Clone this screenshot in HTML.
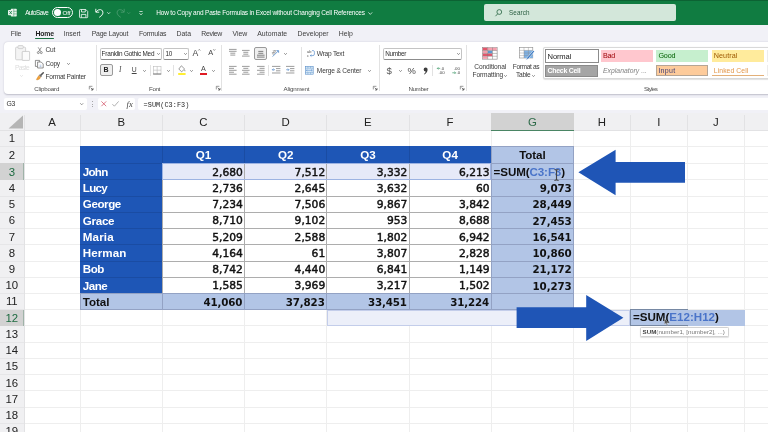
<!DOCTYPE html>
<html lang="en">
<head>
<meta charset="utf-8">
<title>Excel</title>
<style>
html,body{margin:0;padding:0;}
body{width:768px;height:432px;overflow:hidden;background:#fff;font-family:"Liberation Sans",sans-serif;}
#root{filter:url(#soft);position:relative;width:768px;height:432px;overflow:hidden;background:#fff;}
#root div,#root span,#root svg{position:absolute;}
#root span{white-space:nowrap;}
#root svg{overflow:visible;}

</style>
</head>
<body>
<svg width="0" height="0" style="position:absolute"><defs><filter id="soft" x="0" y="0" width="100%" height="100%" color-interpolation-filters="sRGB"><feGaussianBlur stdDeviation="0.55" edgeMode="duplicate"/></filter></defs></svg>
<div id="root">
<div style="left:0.00px;top:0.00px;width:768.00px;height:25.40px;background:#107c41;"></div>
<div style="left:0.00px;top:0.00px;width:768.00px;height:1.00px;background:#0c6233;"></div>
<div style="left:0.00px;top:25.40px;width:768.00px;height:88.00px;background:#f1f1f7;"></div>
<svg style="left:8.00px;top:8.00px;" width="9.2" height="9.2" viewBox="0 0 10.5 10">
<rect x="3.2" y="0.6" width="6.8" height="8.8" rx="0.8" fill="#e8f3ec"/>
<line x1="6.6" y1="0.6" x2="6.6" y2="9.4" stroke="#107c41" stroke-width="0.5"/>
<line x1="3.2" y1="3.5" x2="10" y2="3.5" stroke="#107c41" stroke-width="0.5"/>
<line x1="3.2" y1="6.5" x2="10" y2="6.5" stroke="#107c41" stroke-width="0.5"/>
<rect x="0" y="2" width="6" height="6" rx="0.7" fill="#e8f3ec"/>
<path d="M1.6 3.3 L4.4 6.7 M4.4 3.3 L1.6 6.7" stroke="#107c41" stroke-width="0.9" fill="none"/>
</svg>
<span id="t1" style="top:9.32px;font-size:6.3px;line-height:7.56px;color:#fff;letter-spacing:-0.527px;left:25.20px;">AutoSave</span>
<div style="left:52.20px;top:7.20px;width:20.60px;height:11.00px;border:0.9px solid #fff;border-radius:6px;box-sizing:border-box;"></div>
<div style="left:53.60px;top:8.90px;width:7.60px;height:7.60px;background:#fff;border-radius:50%;"></div>
<span id="t2" style="top:9.18px;font-size:6.2px;line-height:7.44px;color:#fff;letter-spacing:-0.180px;left:62.60px;">Off</span>
<svg style="left:79.00px;top:8.60px;" width="9.2" height="9.2" viewBox="0 0 9.2 9.2">
<path d="M0.5 1.3 Q0.5 0.5 1.3 0.5 L6.8 0.5 L8.7 2.4 L8.7 7.9 Q8.7 8.7 7.9 8.7 L1.3 8.7 Q0.5 8.7 0.5 7.9 Z" fill="none" stroke="#fff" stroke-width="0.8"/>
<path d="M2.5 0.6 L2.5 3 L6.3 3 L6.3 0.6" fill="none" stroke="#fff" stroke-width="0.8"/>
<path d="M2.3 8.6 L2.3 5.4 L6.9 5.4 L6.9 8.6" fill="none" stroke="#fff" stroke-width="0.8"/>
</svg>
<svg style="left:94.50px;top:8.40px;" width="9" height="10" viewBox="0 0 9 10">
<path d="M0.8 0.8 L0.8 4.2 L4.2 4.2" fill="none" stroke="#fff" stroke-width="0.9"/>
<path d="M1 4 Q3 1.2 5.6 1.6 Q8.2 2.2 8 5 Q7.6 7.4 4.2 9.4" fill="none" stroke="#fff" stroke-width="0.9"/>
</svg>
<svg style="left:106.60px;top:12.00px;" width="3.4" height="2.4" viewBox="0 0 3.4 2.4"><path d="M0.3 0.3 L1.7 1.8 L3.1 0.3" fill="none" stroke="#fff" stroke-width="0.7"/></svg>
<svg style="left:115.60px;top:8.40px;" width="9" height="10" viewBox="0 0 9 10">
<path d="M8.2 0.8 L8.2 4.2 L4.8 4.2" fill="none" stroke="#479a6d" stroke-width="0.9"/>
<path d="M8 4 Q6 1.2 3.4 1.6 Q0.8 2.2 1 5 Q1.4 7.4 4.8 9.4" fill="none" stroke="#479a6d" stroke-width="0.9"/>
</svg>
<svg style="left:127.40px;top:12.00px;" width="3.4" height="2.4" viewBox="0 0 3.4 2.4"><path d="M0.3 0.3 L1.7 1.8 L3.1 0.3" fill="none" stroke="#4c9a70" stroke-width="0.7"/></svg>
<svg style="left:138.80px;top:10.60px;" width="4" height="5" viewBox="0 0 4 5"><path d="M0.4 0.5 L3.6 0.5" stroke="#fff" stroke-width="0.7"/><path d="M0.5 2.2 L2 3.9 L3.5 2.2" fill="none" stroke="#fff" stroke-width="0.7"/></svg>
<span id="t3" style="top:9.30px;font-size:6.5px;line-height:7.80px;color:#fff;letter-spacing:-0.185px;left:156.30px;">How to Copy and Paste Formulas in Excel without Changing Cell References</span>
<svg style="left:367.60px;top:11.60px;" width="4.6" height="3" viewBox="0 0 4.6 3"><path d="M0.4 0.4 L2.3 2.4 L4.2 0.4" fill="none" stroke="#fff" stroke-width="0.7"/></svg>
<div style="left:483.50px;top:4.40px;width:192.50px;height:16.40px;background:#d3e7da;border-radius:2px;"></div>
<svg style="left:494.50px;top:8.60px;" width="7.2" height="7.6" viewBox="0 0 7.2 7.6"><circle cx="4.3" cy="3" r="2.4" fill="none" stroke="#1c5c38" stroke-width="0.75"/><path d="M2.6 4.9 L0.5 7.2" stroke="#1c5c38" stroke-width="0.75"/></svg>
<span id="t4" style="top:9.22px;font-size:6.3px;line-height:7.56px;color:#2a5e41;letter-spacing:0.091px;left:509.00px;">Search</span>
<span id="t5" style="top:29.76px;font-size:6.9px;line-height:8.28px;color:#3d3d3d;letter-spacing:-0.152px;left:10.80px;">File</span>
<span id="t6" style="top:29.76px;font-size:6.9px;line-height:8.28px;color:#1f1f1f;font-weight:700;letter-spacing:-0.189px;left:35.40px;">Home</span>
<span id="t7" style="top:29.76px;font-size:6.9px;line-height:8.28px;color:#3d3d3d;letter-spacing:-0.106px;left:63.80px;">Insert</span>
<span id="t8" style="top:29.76px;font-size:6.9px;line-height:8.28px;color:#3d3d3d;letter-spacing:-0.200px;left:91.70px;">Page Layout</span>
<span id="t9" style="top:29.76px;font-size:6.9px;line-height:8.28px;color:#3d3d3d;letter-spacing:-0.177px;left:139.00px;">Formulas</span>
<span id="t10" style="top:29.76px;font-size:6.9px;line-height:8.28px;color:#3d3d3d;letter-spacing:-0.016px;left:176.50px;">Data</span>
<span id="t11" style="top:29.76px;font-size:6.9px;line-height:8.28px;color:#3d3d3d;letter-spacing:-0.316px;left:201.30px;">Review</span>
<span id="t12" style="top:29.76px;font-size:6.9px;line-height:8.28px;color:#3d3d3d;letter-spacing:-0.003px;left:232.50px;">View</span>
<span id="t13" style="top:29.76px;font-size:6.9px;line-height:8.28px;color:#3d3d3d;letter-spacing:0.075px;left:257.20px;">Automate</span>
<span id="t14" style="top:29.76px;font-size:6.9px;line-height:8.28px;color:#3d3d3d;letter-spacing:-0.047px;left:297.60px;">Developer</span>
<span id="t15" style="top:29.76px;font-size:6.9px;line-height:8.28px;color:#3d3d3d;letter-spacing:0.032px;left:338.70px;">Help</span>
<div style="left:35.40px;top:38.40px;width:18.40px;height:1.10px;background:#1c6f42;border-radius:1px;"></div>
<div style="left:4.00px;top:41.70px;width:770.00px;height:51.90px;background:#fff;border-radius:4px 0 0 4px;box-shadow:0 0.6px 1.6px rgba(60,60,90,0.28);"></div>
<div style="left:95.50px;top:45.00px;width:0.60px;height:46.00px;background:#e2e2e2;"></div>
<div style="left:221.00px;top:45.00px;width:0.60px;height:46.00px;background:#e2e2e2;"></div>
<div style="left:378.70px;top:45.00px;width:0.60px;height:46.00px;background:#e2e2e2;"></div>
<div style="left:466.30px;top:45.00px;width:0.60px;height:46.00px;background:#e2e2e2;"></div>
<div style="left:150.00px;top:65.00px;width:0.60px;height:11.00px;background:#e2e2e2;"></div>
<div style="left:172.60px;top:65.00px;width:0.60px;height:11.00px;background:#e2e2e2;"></div>
<div style="left:268.40px;top:65.00px;width:0.60px;height:11.00px;background:#e2e2e2;"></div>
<div style="left:300.80px;top:47.00px;width:0.60px;height:33.00px;background:#e2e2e2;"></div>
<div style="left:432.30px;top:65.00px;width:0.60px;height:11.00px;background:#e2e2e2;"></div>
<svg style="left:15.00px;top:45.40px;" width="15.5" height="16" viewBox="0 0 15.5 16">
<rect x="0.6" y="2.2" width="10" height="12.6" rx="1" fill="#f4f4f4" stroke="#c9c9c9" stroke-width="0.8"/>
<rect x="3" y="0.6" width="5.2" height="3" rx="0.8" fill="#f0f0f0" stroke="#c9c9c9" stroke-width="0.8"/>
<rect x="7.2" y="6.4" width="7.4" height="9" rx="0.6" fill="#fbfbfb" stroke="#c4c4c4" stroke-width="0.8"/>
</svg>
<span id="t16" style="top:63.64px;font-size:6.6px;line-height:7.92px;color:#dcdcdc;letter-spacing:-0.535px;left:22.00px;transform:translateX(-50%);">Paste</span>
<svg style="left:19.90px;top:75.30px;" width="3.0" height="1.9" viewBox="0 0 3.0 1.9"><path d="M0.2 0.2 L1.5 1.6 L2.8 0.2" fill="none" stroke="#d8d8d8" stroke-width="0.65"/></svg>
<svg style="left:37.00px;top:46.60px;" width="5.6" height="7" viewBox="0 0 5.6 7">
<path d="M1.2 0.3 L3.9 4.6 M4.4 0.3 L1.7 4.6" stroke="#555" stroke-width="0.6" fill="none"/>
<circle cx="1.3" cy="5.6" r="1" fill="none" stroke="#555" stroke-width="0.6"/>
<circle cx="4.3" cy="5.6" r="1" fill="none" stroke="#555" stroke-width="0.6"/></svg>
<span id="t17" style="top:46.14px;font-size:6.6px;line-height:7.92px;color:#3a3a3a;letter-spacing:-0.222px;left:45.50px;">Cut</span>
<svg style="left:35.20px;top:59.60px;" width="8.8" height="8.4" viewBox="0 0 8.8 8.4">
<path d="M0.4 0.4 L4.6 0.4 L4.6 1.8 M0.4 0.4 L0.4 6.4 L2.4 6.4" fill="none" stroke="#555" stroke-width="0.65"/>
<path d="M2.6 2 L6.2 2 L8.2 4 L8.2 8 L2.6 8 Z" fill="#fff" stroke="#555" stroke-width="0.65"/>
<path d="M4.6 5.2 L6.4 5.2 M4.6 6.5 L6.4 6.5" stroke="#6d8fc4" stroke-width="0.5"/></svg>
<span id="t18" style="top:59.84px;font-size:6.6px;line-height:7.92px;color:#3a3a3a;letter-spacing:-0.252px;left:45.50px;">Copy</span>
<svg style="left:67.10px;top:62.90px;" width="3.0" height="1.9" viewBox="0 0 3.0 1.9"><path d="M0.2 0.2 L1.5 1.6 L2.8 0.2" fill="none" stroke="#555" stroke-width="0.65"/></svg>
<svg style="left:36.00px;top:72.40px;" width="8" height="8.6" viewBox="0 0 8 8.6">
<path d="M7.3 0.7 L4.9 3.1" stroke="#555" stroke-width="1.5" stroke-linecap="round"/>
<path d="M3.9 2.3 L5.9 4.3 L4.9 5.2 L3 3.3 Z" fill="#6a6a6a"/>
<path d="M2.8 3.6 L4.7 5.5 Q3.8 7.6 1 8 Q0.2 8 0.5 7.2 Q1.6 5.2 2.8 3.6 Z" fill="#f0a13a" stroke="#c77a1c" stroke-width="0.35"/></svg>
<span id="t19" style="top:73.14px;font-size:6.6px;line-height:7.92px;color:#3a3a3a;letter-spacing:-0.236px;left:45.50px;">Format Painter</span>
<span id="t20" style="top:84.68px;font-size:6.2px;line-height:7.44px;color:#4a4a4a;letter-spacing:-0.165px;left:34.20px;">Clipboard</span>
<svg style="left:89.00px;top:86.40px;" width="4.4" height="4.4" viewBox="0 0 4.4 4.4"><path d="M0.3 3.4 L0.3 0.3 L3.4 0.3" fill="none" stroke="#555" stroke-width="0.6"/><path d="M1.7 1.7 L4 4 M4 2 L4 4 L2 4" fill="none" stroke="#444" stroke-width="0.7"/></svg>
<div style="left:100.00px;top:47.50px;width:62.00px;height:12.00px;border:0.6px solid #c4c4c4;border-bottom-color:#8c8c8c;border-radius:2px;box-sizing:border-box;background:#fff;"></div>
<span id="t21" style="top:49.66px;font-size:6.4px;line-height:7.68px;color:#2b2b2b;letter-spacing:-0.241px;left:101.60px;">Franklin Gothic Med</span>
<svg style="left:156.50px;top:52.80px;" width="3.0" height="1.9" viewBox="0 0 3.0 1.9"><path d="M0.2 0.2 L1.5 1.6 L2.8 0.2" fill="none" stroke="#555" stroke-width="0.65"/></svg>
<div style="left:163.20px;top:47.50px;width:26.20px;height:12.00px;border:0.6px solid #c4c4c4;border-bottom-color:#8c8c8c;border-radius:2px;box-sizing:border-box;background:#fff;"></div>
<span id="t22" style="top:49.66px;font-size:6.4px;line-height:7.68px;color:#2b2b2b;letter-spacing:-0.455px;left:165.60px;">10</span>
<svg style="left:184.10px;top:52.80px;" width="3.0" height="1.9" viewBox="0 0 3.0 1.9"><path d="M0.2 0.2 L1.5 1.6 L2.8 0.2" fill="none" stroke="#555" stroke-width="0.65"/></svg>
<span id="t23" style="top:47.84px;font-size:8.6px;line-height:10.32px;color:#444;left:192.60px;">A</span>
<svg style="left:198.40px;top:48.80px;" width="2.6" height="1.8" viewBox="0 0 2.6 1.8"><path d="M0.2 1.6 L1.3 0.3 L2.4 1.6" fill="none" stroke="#444" stroke-width="0.5"/></svg>
<span id="t24" style="top:49.16px;font-size:7.4px;line-height:8.88px;color:#444;left:208.20px;">A</span>
<svg style="left:212.80px;top:49.20px;" width="2.6" height="1.8" viewBox="0 0 2.6 1.8"><path d="M0.2 0.2 L1.3 1.5 L2.4 0.2" fill="none" stroke="#444" stroke-width="0.5"/></svg>
<div style="left:99.60px;top:64.00px;width:13.00px;height:12.20px;border:0.7px solid #9a9a9a;border-radius:2px;box-sizing:border-box;background:#efefef;"></div>
<span id="t25" style="top:66.00px;font-size:7px;line-height:8.40px;color:#222;font-weight:700;left:106.10px;transform:translateX(-50%);">B</span>
<span id="t26" style="top:65.88px;font-size:7.2px;line-height:8.64px;color:#444;font-style:italic;font-family:'Liberation Serif',serif;left:120.20px;transform:translateX(-50%);">I</span>
<span id="t27" style="top:65.72px;font-size:6.8px;line-height:8.16px;color:#444;left:134.20px;transform:translateX(-50%);text-decoration:underline;text-underline-offset:0.6px;">U</span>
<svg style="left:143.10px;top:69.50px;" width="3.0" height="1.9" viewBox="0 0 3.0 1.9"><path d="M0.2 0.2 L1.5 1.6 L2.8 0.2" fill="none" stroke="#555" stroke-width="0.65"/></svg>
<svg style="left:153.40px;top:66.20px;" width="8.4" height="8.4" viewBox="0 0 9 9">
<rect x="0.4" y="0.4" width="8.2" height="8.2" fill="none" stroke="#b8b8b8" stroke-width="0.6"/>
<path d="M4.5 0.4 L4.5 8.6 M0.4 4.5 L8.6 4.5" stroke="#b8b8b8" stroke-width="0.6"/>
<path d="M0.2 8.6 L8.8 8.6" stroke="#555" stroke-width="0.8"/></svg>
<svg style="left:166.50px;top:69.50px;" width="3.0" height="1.9" viewBox="0 0 3.0 1.9"><path d="M0.2 0.2 L1.5 1.6 L2.8 0.2" fill="none" stroke="#555" stroke-width="0.65"/></svg>
<svg style="left:177.60px;top:64.60px;" width="8" height="10.4" viewBox="0 0 8 10.4">
<path d="M3.4 0.8 L6.6 4 L3.6 6.8 L0.8 4 Z" fill="#fff" stroke="#555" stroke-width="0.6"/>
<path d="M6.8 4.6 Q7.8 6 7 6.6 Q6.2 6 6.8 4.6Z" fill="#555"/>
<rect x="0.2" y="8" width="7.4" height="2" fill="#ffee33"/></svg>
<svg style="left:189.70px;top:69.50px;" width="3.0" height="1.9" viewBox="0 0 3.0 1.9"><path d="M0.2 0.2 L1.5 1.6 L2.8 0.2" fill="none" stroke="#555" stroke-width="0.65"/></svg>
<span id="t28" style="top:65.08px;font-size:7.2px;line-height:8.64px;color:#444;left:203.30px;transform:translateX(-50%);">A</span>
<div style="left:199.80px;top:72.80px;width:7.00px;height:1.90px;background:#e01b24;"></div>
<svg style="left:211.70px;top:69.50px;" width="3.0" height="1.9" viewBox="0 0 3.0 1.9"><path d="M0.2 0.2 L1.5 1.6 L2.8 0.2" fill="none" stroke="#555" stroke-width="0.65"/></svg>
<span id="t29" style="top:84.68px;font-size:6.2px;line-height:7.44px;color:#4a4a4a;letter-spacing:-0.348px;left:149.00px;">Font</span>
<svg style="left:215.60px;top:86.40px;" width="4.4" height="4.4" viewBox="0 0 4.4 4.4"><path d="M0.3 3.4 L0.3 0.3 L3.4 0.3" fill="none" stroke="#555" stroke-width="0.6"/><path d="M1.7 1.7 L4 4 M4 2 L4 4 L2 4" fill="none" stroke="#444" stroke-width="0.7"/></svg>
<svg style="left:228.60px;top:49.40px;" width="7.6" height="7.6" viewBox="0 0 7.6 7.6"><path d="M0.00 0.40 L7.60 0.40" stroke="#666" stroke-width="0.65"/><path d="M0.00 2.30 L7.60 2.30" stroke="#666" stroke-width="0.65"/><path d="M1.30 4.20 L6.30 4.20" stroke="#666" stroke-width="0.65"/><path d="M1.30 6.10 L6.30 6.10" stroke="#666" stroke-width="0.65"/></svg>
<svg style="left:242.40px;top:50.40px;" width="7.6" height="7.6" viewBox="0 0 7.6 7.6"><path d="M0.00 0.40 L7.60 0.40" stroke="#666" stroke-width="0.65"/><path d="M1.30 2.30 L6.30 2.30" stroke="#666" stroke-width="0.65"/><path d="M1.30 4.20 L6.30 4.20" stroke="#666" stroke-width="0.65"/><path d="M0.00 6.10 L7.60 6.10" stroke="#666" stroke-width="0.65"/></svg>
<div style="left:254.40px;top:47.20px;width:12.80px;height:12.40px;border:0.7px solid #9a9a9a;border-radius:2px;box-sizing:border-box;background:#efefef;"></div>
<svg style="left:257.00px;top:51.20px;" width="7.6" height="7.6" viewBox="0 0 7.6 7.6"><path d="M1.30 0.40 L6.30 0.40" stroke="#444" stroke-width="0.65"/><path d="M1.30 2.30 L6.30 2.30" stroke="#444" stroke-width="0.65"/><path d="M0.00 4.20 L7.60 4.20" stroke="#444" stroke-width="0.65"/><path d="M0.00 6.10 L7.60 6.10" stroke="#444" stroke-width="0.65"/></svg>
<svg style="left:272.00px;top:48.60px;" width="8.6" height="8.4" viewBox="0 0 8.6 8.4">
<path d="M0.6 7.6 L6.2 2" stroke="#3a78c2" stroke-width="0.7"/><path d="M4.4 1.6 L6.6 1.6 L6.6 3.8" fill="none" stroke="#3a78c2" stroke-width="0.7"/>
<text x="0" y="4.6" font-size="4.4" fill="#555" transform="rotate(-45 2 4)" font-family="Liberation Sans, sans-serif">ab</text></svg>
<svg style="left:284.10px;top:52.80px;" width="3.0" height="1.9" viewBox="0 0 3.0 1.9"><path d="M0.2 0.2 L1.5 1.6 L2.8 0.2" fill="none" stroke="#555" stroke-width="0.65"/></svg>
<svg style="left:228.60px;top:65.80px;" width="7.6" height="9.75" viewBox="0 0 7.6 9.75"><path d="M0.00 0.40 L7.60 0.40" stroke="#666" stroke-width="0.65"/><path d="M0.00 2.35 L5.00 2.35" stroke="#666" stroke-width="0.65"/><path d="M0.00 4.30 L7.60 4.30" stroke="#666" stroke-width="0.65"/><path d="M0.00 6.25 L5.00 6.25" stroke="#666" stroke-width="0.65"/><path d="M0.00 8.20 L7.60 8.20" stroke="#666" stroke-width="0.65"/></svg>
<svg style="left:242.40px;top:65.80px;" width="7.6" height="9.75" viewBox="0 0 7.6 9.75"><path d="M0.00 0.40 L7.60 0.40" stroke="#666" stroke-width="0.65"/><path d="M1.30 2.35 L6.30 2.35" stroke="#666" stroke-width="0.65"/><path d="M0.00 4.30 L7.60 4.30" stroke="#666" stroke-width="0.65"/><path d="M1.30 6.25 L6.30 6.25" stroke="#666" stroke-width="0.65"/><path d="M0.00 8.20 L7.60 8.20" stroke="#666" stroke-width="0.65"/></svg>
<svg style="left:256.60px;top:65.80px;" width="7.6" height="9.75" viewBox="0 0 7.6 9.75"><path d="M0.00 0.40 L7.60 0.40" stroke="#666" stroke-width="0.65"/><path d="M2.60 2.35 L7.60 2.35" stroke="#666" stroke-width="0.65"/><path d="M0.00 4.30 L7.60 4.30" stroke="#666" stroke-width="0.65"/><path d="M2.60 6.25 L7.60 6.25" stroke="#666" stroke-width="0.65"/><path d="M0.00 8.20 L7.60 8.20" stroke="#666" stroke-width="0.65"/></svg>
<svg style="left:272.00px;top:66.20px;" width="8.4" height="8" viewBox="0 0 8.4 8"><path d="M0 0.4 L8.4 0.4 M4 2.6 L8.4 2.6 M4 4.8 L8.4 4.8 M0 7 L8.4 7" stroke="#666" stroke-width="0.65"/>
<path d="M3 3.7 L0.4 3.7 M1.5 2.5 L0.3 3.7 L1.5 4.9" fill="none" stroke="#3a78c2" stroke-width="0.6"/></svg>
<svg style="left:286.00px;top:66.20px;" width="8.4" height="8" viewBox="0 0 8.4 8"><path d="M0 0.4 L8.4 0.4 M4 2.6 L8.4 2.6 M4 4.8 L8.4 4.8 M0 7 L8.4 7" stroke="#666" stroke-width="0.65"/>
<path d="M0.2 3.7 L2.9 3.7 M1.8 2.5 L3 3.7 L1.8 4.9" fill="none" stroke="#3a78c2" stroke-width="0.6"/></svg>
<svg style="left:306.60px;top:48.60px;" width="7.6" height="8.4" viewBox="0 0 7.6 8.4">
<text x="0" y="3.6" font-size="4" fill="#555" font-family="Liberation Sans, sans-serif">ab</text>
<text x="0" y="8" font-size="4" fill="#555" font-family="Liberation Sans, sans-serif">c</text>
<path d="M5 1.6 L6.4 1.6 Q7.4 1.6 7.4 3.4 L7.4 5 Q7.4 6.6 6 6.6 L3.4 6.6 M4.4 5.6 L3.3 6.6 L4.4 7.6" fill="none" stroke="#3a78c2" stroke-width="0.6"/></svg>
<span id="t30" style="top:49.74px;font-size:6.6px;line-height:7.92px;color:#3a3a3a;letter-spacing:-0.250px;left:316.80px;">Wrap Text</span>
<svg style="left:305.40px;top:66.00px;" width="8.6" height="8.6" viewBox="0 0 8.6 8.6">
<rect x="0.4" y="0.4" width="7.8" height="7.8" fill="#dfeefa" stroke="#5a8fc8" stroke-width="0.6"/>
<path d="M0.4 2.2 L8.2 2.2 M0.4 6.4 L8.2 6.4 M2.9 0.4 L2.9 2.2 M5.6 0.4 L5.6 2.2 M2.9 6.4 L2.9 8.2 M5.6 6.4 L5.6 8.2" stroke="#5a8fc8" stroke-width="0.45"/>
<path d="M1.4 4.3 L7.2 4.3 M2.3 3.5 L1.4 4.3 L2.3 5.1 M6.3 3.5 L7.2 4.3 L6.3 5.1" fill="none" stroke="#3a78c2" stroke-width="0.5"/></svg>
<span id="t31" style="top:66.64px;font-size:6.6px;line-height:7.92px;color:#3a3a3a;letter-spacing:-0.153px;left:316.80px;">Merge &amp; Center</span>
<svg style="left:368.30px;top:69.70px;" width="3.0" height="1.9" viewBox="0 0 3.0 1.9"><path d="M0.2 0.2 L1.5 1.6 L2.8 0.2" fill="none" stroke="#555" stroke-width="0.65"/></svg>
<span id="t32" style="top:84.68px;font-size:6.2px;line-height:7.44px;color:#4a4a4a;letter-spacing:-0.191px;left:283.60px;">Alignment</span>
<svg style="left:373.00px;top:86.40px;" width="4.4" height="4.4" viewBox="0 0 4.4 4.4"><path d="M0.3 3.4 L0.3 0.3 L3.4 0.3" fill="none" stroke="#555" stroke-width="0.6"/><path d="M1.7 1.7 L4 4 M4 2 L4 4 L2 4" fill="none" stroke="#444" stroke-width="0.7"/></svg>
<div style="left:383.20px;top:47.80px;width:78.60px;height:11.80px;border:0.6px solid #c4c4c4;border-bottom-color:#8c8c8c;border-radius:2px;box-sizing:border-box;background:#fff;"></div>
<span id="t33" style="top:49.76px;font-size:6.4px;line-height:7.68px;color:#2b2b2b;letter-spacing:-0.289px;left:385.20px;">Number</span>
<svg style="left:457.10px;top:52.80px;" width="3.0" height="1.9" viewBox="0 0 3.0 1.9"><path d="M0.2 0.2 L1.5 1.6 L2.8 0.2" fill="none" stroke="#555" stroke-width="0.65"/></svg>
<span id="t34" style="top:64.84px;font-size:9.6px;line-height:11.52px;color:#555;left:389.20px;transform:translateX(-50%);">$</span>
<svg style="left:398.50px;top:69.70px;" width="3.0" height="1.9" viewBox="0 0 3.0 1.9"><path d="M0.2 0.2 L1.5 1.6 L2.8 0.2" fill="none" stroke="#555" stroke-width="0.65"/></svg>
<span id="t35" style="top:64.96px;font-size:9.4px;line-height:11.28px;color:#444;left:411.60px;transform:translateX(-50%);">%</span>
<svg style="left:423.20px;top:66.80px;" width="5" height="8" viewBox="0 0 5 8"><path d="M2.6 0.4 A2 2 0 1 0 2.7 4.4 Q2.4 6 0.9 7 L1.3 7.5 Q4.6 5.6 4.6 2.6 A2.1 2.1 0 0 0 2.6 0.4 Z" fill="#3c3c3c"/></svg>
<svg style="left:437.40px;top:66.00px;" width="8.6" height="8.6" viewBox="0 0 8.6 8.6">
<text x="3.6" y="3.8" font-size="4.4" fill="#444" font-family="Liberation Sans, sans-serif">.0</text>
<text x="1.6" y="8.4" font-size="4.4" fill="#444" font-family="Liberation Sans, sans-serif">.00</text>
<path d="M3.2 2.4 L0.3 2.4 M1.4 1.3 L0.3 2.4 L1.4 3.5" fill="none" stroke="#2f8f5b" stroke-width="0.65"/></svg>
<svg style="left:451.60px;top:66.00px;" width="8.6" height="8.6" viewBox="0 0 8.6 8.6">
<text x="1.8" y="3.8" font-size="4.4" fill="#444" font-family="Liberation Sans, sans-serif">.00</text>
<text x="4.6" y="8.4" font-size="4.4" fill="#444" font-family="Liberation Sans, sans-serif">.0</text>
<path d="M0.3 6.8 L3.6 6.8 M2.5 5.7 L3.6 6.8 L2.5 7.9" fill="none" stroke="#2f8f5b" stroke-width="0.65"/></svg>
<span id="t36" style="top:84.68px;font-size:6.2px;line-height:7.44px;color:#4a4a4a;letter-spacing:-0.353px;left:408.40px;">Number</span>
<svg style="left:459.80px;top:86.40px;" width="4.4" height="4.4" viewBox="0 0 4.4 4.4"><path d="M0.3 3.4 L0.3 0.3 L3.4 0.3" fill="none" stroke="#555" stroke-width="0.6"/><path d="M1.7 1.7 L4 4 M4 2 L4 4 L2 4" fill="none" stroke="#444" stroke-width="0.7"/></svg>
<svg style="left:482.40px;top:46.80px;" width="15.6" height="12.6" viewBox="0 0 14.8 12">
<rect x="0.4" y="0.4" width="14" height="11.2" fill="#fff" stroke="#8a8a8a" stroke-width="0.6"/>
<rect x="0.7" y="0.7" width="4.6" height="2.6" fill="#e4546a"/><rect x="5.6" y="0.7" width="8.5" height="2.6" fill="#f5a0ae"/>
<rect x="0.7" y="3.6" width="4.6" height="2.4" fill="#f5a0ae"/><rect x="5.6" y="3.6" width="4.2" height="2.4" fill="#5b9bd5"/>
<rect x="0.7" y="6.3" width="9" height="2.4" fill="#e4546a"/>
<rect x="0.7" y="9" width="4.6" height="2.3" fill="#f5a0ae"/>
<path d="M5.4 0.4 L5.4 11.6 M10 0.4 L10 11.6 M0.4 3.4 L14.4 3.4 M0.4 6.1 L14.4 6.1 M0.4 8.8 L14.4 8.8" stroke="#7a7a7a" stroke-width="0.45"/></svg>
<span id="t37" style="top:63.04px;font-size:6.6px;line-height:7.92px;color:#3a3a3a;letter-spacing:-0.109px;left:490.20px;transform:translateX(-50%);">Conditional</span>
<span id="t38" style="top:71.04px;font-size:6.6px;line-height:7.92px;color:#3a3a3a;letter-spacing:-0.092px;left:487.80px;transform:translateX(-50%);">Formatting</span>
<svg style="left:504.10px;top:74.50px;" width="3.0" height="1.9" viewBox="0 0 3.0 1.9"><path d="M0.2 0.2 L1.5 1.6 L2.8 0.2" fill="none" stroke="#555" stroke-width="0.65"/></svg>
<svg style="left:518.60px;top:47.20px;" width="15.6" height="12.4" viewBox="0 0 15.6 12.4">
<rect x="0.4" y="0.4" width="13.4" height="10.6" fill="#fff" stroke="#8a8a8a" stroke-width="0.6"/>
<rect x="5" y="3.4" width="8.8" height="7.6" fill="#7fb2e5"/>
<path d="M5 0.4 L5 11 M9.4 0.4 L9.4 11 M0.4 3.4 L13.8 3.4 M0.4 6 L13.8 6 M0.4 8.6 L13.8 8.6" stroke="#8a8a8a" stroke-width="0.4"/>
<path d="M14.4 3.4 L8.4 10.2 L6.6 13.2 L9.6 11.6 L15.4 4.6 Z" fill="#3a78c2" stroke="#fff" stroke-width="0.5"/></svg>
<span id="t39" style="top:63.04px;font-size:6.6px;line-height:7.92px;color:#3a3a3a;letter-spacing:-0.354px;left:526.00px;transform:translateX(-50%);">Format as</span>
<span id="t40" style="top:71.04px;font-size:6.6px;line-height:7.92px;color:#3a3a3a;letter-spacing:-0.273px;left:523.20px;transform:translateX(-50%);">Table</span>
<svg style="left:532.10px;top:74.50px;" width="3.0" height="1.9" viewBox="0 0 3.0 1.9"><path d="M0.2 0.2 L1.5 1.6 L2.8 0.2" fill="none" stroke="#555" stroke-width="0.65"/></svg>
<div style="left:542.80px;top:47.00px;width:230.00px;height:31.60px;background:#fff;border:0.6px solid #d9d9d9;border-radius:2px;box-sizing:border-box;box-shadow:0 0.4px 1px rgba(0,0,0,0.12);"></div>
<div style="left:544.60px;top:49.20px;width:54.00px;height:14.00px;background:#fff;border:0.9px solid #8c8c8c;box-sizing:border-box;"></div>
<span id="t41" style="top:51.64px;font-size:7.6px;line-height:9.12px;color:#222;letter-spacing:-0.181px;left:547.60px;">Normal</span>
<div style="left:601.00px;top:50.20px;width:52.00px;height:11.40px;background:#ffc7ce;"></div>
<span id="t42" style="top:51.78px;font-size:7.2px;line-height:8.64px;color:#9c0006;letter-spacing:-0.266px;left:603.00px;">Bad</span>
<div style="left:656.40px;top:50.20px;width:52.00px;height:11.40px;background:#c6efce;"></div>
<span id="t43" style="top:51.78px;font-size:7.2px;line-height:8.64px;color:#006100;letter-spacing:-0.148px;left:658.40px;">Good</span>
<div style="left:711.80px;top:50.20px;width:52.00px;height:11.40px;background:#ffeb9c;"></div>
<span id="t44" style="top:51.78px;font-size:7.2px;line-height:8.64px;color:#9c5700;letter-spacing:0.061px;left:713.80px;">Neutral</span>
<div style="left:766.60px;top:50.20px;width:6.00px;height:11.40px;background:#ececec;"></div>
<div style="left:544.80px;top:65.20px;width:53.00px;height:11.60px;background:#a5a5a5;border:0.7px solid #8a8a8a;box-sizing:border-box;"></div>
<span id="t45" style="top:66.80px;font-size:7px;line-height:8.40px;color:#fff;font-weight:700;letter-spacing:-0.280px;left:547.40px;">Check Cell</span>
<span id="t46" style="top:66.82px;font-size:6.8px;line-height:8.16px;color:#7f7f7f;font-style:italic;letter-spacing:0.036px;left:603.00px;">Explanatory ...</span>
<div style="left:656.40px;top:65.30px;width:52.00px;height:11.00px;background:#fdcb9b;border:0.5px solid #b5a595;box-sizing:border-box;"></div>
<span id="t47" style="top:66.70px;font-size:7px;line-height:8.40px;color:#3f3f76;letter-spacing:0.284px;left:658.40px;">Input</span>
<span id="t48" style="top:66.62px;font-size:6.8px;line-height:8.16px;color:#e39648;letter-spacing:0.087px;left:713.80px;">Linked Cell</span>
<div style="left:712.20px;top:75.20px;width:51.80px;height:0.80px;background:#e3b079;"></div>
<div style="left:766.60px;top:65.30px;width:6.00px;height:11.00px;background:#ececec;"></div>
<span id="t49" style="top:84.68px;font-size:6.2px;line-height:7.44px;color:#4a4a4a;letter-spacing:-0.577px;left:644.00px;">Styles</span>
<div style="left:4.00px;top:98.20px;width:83.00px;height:11.40px;background:#fff;border-radius:2px;"></div>
<span id="t50" style="top:100.06px;font-size:6.9px;line-height:8.28px;color:#333;letter-spacing:-0.452px;left:6.60px;">G3</span>
<svg style="left:80.28px;top:103.17px;" width="3.4499999999999997" height="2.1849999999999996" viewBox="0 0 3.4499999999999997 2.1849999999999996"><path d="M0.2 0.2 L1.7249999999999999 1.8399999999999999 L3.2499999999999996 0.2" fill="none" stroke="#666" stroke-width="0.65"/></svg>
<div style="left:91.60px;top:101.45px;width:0.90px;height:0.90px;background:#777;border-radius:50%;"></div>
<div style="left:91.60px;top:103.65px;width:0.90px;height:0.90px;background:#777;border-radius:50%;"></div>
<div style="left:91.60px;top:105.85px;width:0.90px;height:0.90px;background:#777;border-radius:50%;"></div>
<div style="left:98.00px;top:98.20px;width:37.00px;height:11.40px;background:#fff;border-radius:2px;"></div>
<svg style="left:100.80px;top:101.40px;" width="5.6" height="5.6" viewBox="0 0 5.6 5.6"><path d="M0.4 0.4 L5.2 5.2 M5.2 0.4 L0.4 5.2" stroke="#d0455a" stroke-width="0.7" fill="none"/></svg>
<svg style="left:112.00px;top:101.40px;" width="7" height="5.6" viewBox="0 0 7 5.6"><path d="M0.4 3.2 L2.4 5.2 L6.6 0.4" stroke="#8f8f8f" stroke-width="0.7" fill="none"/></svg>
<span id="t51" style="top:98.64px;font-size:8.6px;line-height:10.32px;color:#444;font-style:italic;font-family:'Liberation Serif',serif;left:129.60px;transform:translateX(-50%);">fx</span>
<div style="left:138.00px;top:98.20px;width:640.00px;height:11.40px;background:#fff;border-radius:2px 0 0 2px;"></div>
<span id="t52" style="top:100.82px;font-size:6.8px;line-height:8.16px;color:#262626;font-family:'Liberation Mono',monospace;letter-spacing:0.084px;left:143.60px;">=SUM(C3:F3)</span>
<div style="left:0.00px;top:113.40px;width:768.00px;height:318.60px;background:#fff;"></div>
<div style="left:0.00px;top:113.40px;width:768.00px;height:17.30px;background:#f0f0f2;"></div>
<div style="left:0.00px;top:130.70px;width:24.00px;height:301.30px;background:#f0f0f2;"></div>
<div style="left:23.60px;top:130.70px;width:0.80px;height:301.30px;background:#eeeeee;"></div>
<div style="left:79.80px;top:130.70px;width:0.80px;height:301.30px;background:#eeeeee;"></div>
<div style="left:161.90px;top:130.70px;width:0.80px;height:301.30px;background:#eeeeee;"></div>
<div style="left:244.10px;top:130.70px;width:0.80px;height:301.30px;background:#eeeeee;"></div>
<div style="left:326.40px;top:130.70px;width:0.80px;height:301.30px;background:#eeeeee;"></div>
<div style="left:408.60px;top:130.70px;width:0.80px;height:301.30px;background:#eeeeee;"></div>
<div style="left:490.80px;top:130.70px;width:0.80px;height:301.30px;background:#eeeeee;"></div>
<div style="left:573.20px;top:130.70px;width:0.80px;height:301.30px;background:#eeeeee;"></div>
<div style="left:629.90px;top:130.70px;width:0.80px;height:301.30px;background:#eeeeee;"></div>
<div style="left:687.00px;top:130.70px;width:0.80px;height:301.30px;background:#eeeeee;"></div>
<div style="left:744.00px;top:130.70px;width:0.80px;height:301.30px;background:#eeeeee;"></div>
<div style="left:801.10px;top:130.70px;width:0.80px;height:301.30px;background:#eeeeee;"></div>
<div style="left:24.00px;top:145.80px;width:744.00px;height:0.80px;background:#eeeeee;"></div>
<div style="left:24.00px;top:163.08px;width:744.00px;height:0.80px;background:#eeeeee;"></div>
<div style="left:24.00px;top:179.32px;width:744.00px;height:0.80px;background:#eeeeee;"></div>
<div style="left:24.00px;top:195.56px;width:744.00px;height:0.80px;background:#eeeeee;"></div>
<div style="left:24.00px;top:211.80px;width:744.00px;height:0.80px;background:#eeeeee;"></div>
<div style="left:24.00px;top:228.04px;width:744.00px;height:0.80px;background:#eeeeee;"></div>
<div style="left:24.00px;top:244.28px;width:744.00px;height:0.80px;background:#eeeeee;"></div>
<div style="left:24.00px;top:260.52px;width:744.00px;height:0.80px;background:#eeeeee;"></div>
<div style="left:24.00px;top:276.76px;width:744.00px;height:0.80px;background:#eeeeee;"></div>
<div style="left:24.00px;top:293.00px;width:744.00px;height:0.80px;background:#eeeeee;"></div>
<div style="left:24.00px;top:309.24px;width:744.00px;height:0.80px;background:#eeeeee;"></div>
<div style="left:24.00px;top:325.48px;width:744.00px;height:0.80px;background:#eeeeee;"></div>
<div style="left:24.00px;top:341.72px;width:744.00px;height:0.80px;background:#eeeeee;"></div>
<div style="left:24.00px;top:357.96px;width:744.00px;height:0.80px;background:#eeeeee;"></div>
<div style="left:24.00px;top:374.20px;width:744.00px;height:0.80px;background:#eeeeee;"></div>
<div style="left:24.00px;top:390.44px;width:744.00px;height:0.80px;background:#eeeeee;"></div>
<div style="left:24.00px;top:406.68px;width:744.00px;height:0.80px;background:#eeeeee;"></div>
<div style="left:24.00px;top:422.92px;width:744.00px;height:0.80px;background:#eeeeee;"></div>
<div style="left:24.00px;top:439.16px;width:744.00px;height:0.80px;background:#eeeeee;"></div>
<div style="left:79.80px;top:115.40px;width:0.80px;height:15.30px;background:#e2e2e4;"></div>
<div style="left:161.90px;top:115.40px;width:0.80px;height:15.30px;background:#e2e2e4;"></div>
<div style="left:244.10px;top:115.40px;width:0.80px;height:15.30px;background:#e2e2e4;"></div>
<div style="left:326.40px;top:115.40px;width:0.80px;height:15.30px;background:#e2e2e4;"></div>
<div style="left:408.60px;top:115.40px;width:0.80px;height:15.30px;background:#e2e2e4;"></div>
<div style="left:490.80px;top:115.40px;width:0.80px;height:15.30px;background:#e2e2e4;"></div>
<div style="left:573.20px;top:115.40px;width:0.80px;height:15.30px;background:#e2e2e4;"></div>
<div style="left:629.90px;top:115.40px;width:0.80px;height:15.30px;background:#e2e2e4;"></div>
<div style="left:687.00px;top:115.40px;width:0.80px;height:15.30px;background:#e2e2e4;"></div>
<div style="left:744.00px;top:115.40px;width:0.80px;height:15.30px;background:#e2e2e4;"></div>
<div style="left:801.10px;top:115.40px;width:0.80px;height:15.30px;background:#e2e2e4;"></div>
<div style="left:0.00px;top:145.80px;width:24.00px;height:0.80px;background:#e6e6e8;"></div>
<div style="left:0.00px;top:163.08px;width:24.00px;height:0.80px;background:#e6e6e8;"></div>
<div style="left:0.00px;top:179.32px;width:24.00px;height:0.80px;background:#e6e6e8;"></div>
<div style="left:0.00px;top:195.56px;width:24.00px;height:0.80px;background:#e6e6e8;"></div>
<div style="left:0.00px;top:211.80px;width:24.00px;height:0.80px;background:#e6e6e8;"></div>
<div style="left:0.00px;top:228.04px;width:24.00px;height:0.80px;background:#e6e6e8;"></div>
<div style="left:0.00px;top:244.28px;width:24.00px;height:0.80px;background:#e6e6e8;"></div>
<div style="left:0.00px;top:260.52px;width:24.00px;height:0.80px;background:#e6e6e8;"></div>
<div style="left:0.00px;top:276.76px;width:24.00px;height:0.80px;background:#e6e6e8;"></div>
<div style="left:0.00px;top:293.00px;width:24.00px;height:0.80px;background:#e6e6e8;"></div>
<div style="left:0.00px;top:309.24px;width:24.00px;height:0.80px;background:#e6e6e8;"></div>
<div style="left:0.00px;top:325.48px;width:24.00px;height:0.80px;background:#e6e6e8;"></div>
<div style="left:0.00px;top:341.72px;width:24.00px;height:0.80px;background:#e6e6e8;"></div>
<div style="left:0.00px;top:357.96px;width:24.00px;height:0.80px;background:#e6e6e8;"></div>
<div style="left:0.00px;top:374.20px;width:24.00px;height:0.80px;background:#e6e6e8;"></div>
<div style="left:0.00px;top:390.44px;width:24.00px;height:0.80px;background:#e6e6e8;"></div>
<div style="left:0.00px;top:406.68px;width:24.00px;height:0.80px;background:#e6e6e8;"></div>
<div style="left:0.00px;top:422.92px;width:24.00px;height:0.80px;background:#e6e6e8;"></div>
<div style="left:0.00px;top:439.16px;width:24.00px;height:0.80px;background:#e6e6e8;"></div>
<div style="left:0.00px;top:130.30px;width:768.00px;height:0.80px;background:#e2e2e4;"></div>
<div style="left:23.50px;top:115.40px;width:0.80px;height:316.60px;background:#e2e2e4;"></div>
<svg style="left:8.00px;top:115.40px;" width="15.4" height="14" viewBox="0 0 15.4 14"><path d="M15 0.6 L15 13.6 L0.6 13.6 Z" fill="#b5b5b5"/></svg>
<div style="left:491.20px;top:113.40px;width:82.40px;height:17.30px;background:#d2d2d2;"></div>
<div style="left:491.20px;top:129.70px;width:82.40px;height:1.00px;background:#4a8564;"></div>
<div style="left:0.00px;top:163.48px;width:24.00px;height:16.24px;background:#d2d2d2;"></div>
<div style="left:23.10px;top:163.48px;width:0.90px;height:16.24px;background:#9fb3a8;"></div>
<div style="left:0.00px;top:309.64px;width:24.00px;height:16.24px;background:#d2d2d2;"></div>
<div style="left:23.10px;top:309.64px;width:0.90px;height:16.24px;background:#9fb3a8;"></div>
<span id="t53" style="top:116.06px;font-size:11.4px;line-height:13.68px;color:#222;left:52.10px;transform:translateX(-50%);">A</span>
<span id="t54" style="top:116.06px;font-size:11.4px;line-height:13.68px;color:#222;left:121.25px;transform:translateX(-50%);">B</span>
<span id="t55" style="top:116.06px;font-size:11.4px;line-height:13.68px;color:#222;left:203.40px;transform:translateX(-50%);">C</span>
<span id="t56" style="top:116.06px;font-size:11.4px;line-height:13.68px;color:#222;left:285.65px;transform:translateX(-50%);">D</span>
<span id="t57" style="top:116.06px;font-size:11.4px;line-height:13.68px;color:#222;left:367.90px;transform:translateX(-50%);">E</span>
<span id="t58" style="top:116.06px;font-size:11.4px;line-height:13.68px;color:#222;left:450.10px;transform:translateX(-50%);">F</span>
<span id="t59" style="top:116.06px;font-size:11.4px;line-height:13.68px;color:#2f6b4a;left:532.40px;transform:translateX(-50%);">G</span>
<span id="t60" style="top:116.06px;font-size:11.4px;line-height:13.68px;color:#222;left:601.95px;transform:translateX(-50%);">H</span>
<span id="t61" style="top:116.06px;font-size:11.4px;line-height:13.68px;color:#222;left:658.85px;transform:translateX(-50%);">I</span>
<span id="t62" style="top:116.06px;font-size:11.4px;line-height:13.68px;color:#222;left:715.90px;transform:translateX(-50%);">J</span>
<span id="t63" style="top:116.06px;font-size:11.4px;line-height:13.68px;color:#222;left:772.95px;transform:translateX(-50%);">K</span>
<span id="t64" style="top:132.41px;font-size:11.4px;line-height:13.68px;color:#222;left:11.80px;transform:translateX(-50%);">1</span>
<span id="t65" style="top:148.80px;font-size:11.4px;line-height:13.68px;color:#222;left:11.80px;transform:translateX(-50%);">2</span>
<span id="t66" style="top:165.56px;font-size:11.4px;line-height:13.68px;color:#1d6b41;left:11.80px;transform:translateX(-50%);">3</span>
<span id="t67" style="top:181.80px;font-size:11.4px;line-height:13.68px;color:#222;left:11.80px;transform:translateX(-50%);">4</span>
<span id="t68" style="top:198.04px;font-size:11.4px;line-height:13.68px;color:#222;left:11.80px;transform:translateX(-50%);">5</span>
<span id="t69" style="top:214.28px;font-size:11.4px;line-height:13.68px;color:#222;left:11.80px;transform:translateX(-50%);">6</span>
<span id="t70" style="top:230.52px;font-size:11.4px;line-height:13.68px;color:#222;left:11.80px;transform:translateX(-50%);">7</span>
<span id="t71" style="top:246.76px;font-size:11.4px;line-height:13.68px;color:#222;left:11.80px;transform:translateX(-50%);">8</span>
<span id="t72" style="top:263.00px;font-size:11.4px;line-height:13.68px;color:#222;left:11.80px;transform:translateX(-50%);">9</span>
<span id="t73" style="top:279.24px;font-size:11.4px;line-height:13.68px;color:#222;left:11.80px;transform:translateX(-50%);">10</span>
<span id="t74" style="top:295.48px;font-size:11.4px;line-height:13.68px;color:#222;left:11.80px;transform:translateX(-50%);">11</span>
<span id="t75" style="top:311.72px;font-size:11.4px;line-height:13.68px;color:#1d6b41;left:11.80px;transform:translateX(-50%);">12</span>
<span id="t76" style="top:327.96px;font-size:11.4px;line-height:13.68px;color:#222;left:11.80px;transform:translateX(-50%);">13</span>
<span id="t77" style="top:344.20px;font-size:11.4px;line-height:13.68px;color:#222;left:11.80px;transform:translateX(-50%);">14</span>
<span id="t78" style="top:360.44px;font-size:11.4px;line-height:13.68px;color:#222;left:11.80px;transform:translateX(-50%);">15</span>
<span id="t79" style="top:376.68px;font-size:11.4px;line-height:13.68px;color:#222;left:11.80px;transform:translateX(-50%);">16</span>
<span id="t80" style="top:392.92px;font-size:11.4px;line-height:13.68px;color:#222;left:11.80px;transform:translateX(-50%);">17</span>
<span id="t81" style="top:409.16px;font-size:11.4px;line-height:13.68px;color:#222;left:11.80px;transform:translateX(-50%);">18</span>
<span id="t82" style="top:425.40px;font-size:11.4px;line-height:13.68px;color:#222;left:11.80px;transform:translateX(-50%);">19</span>
<div style="left:80.20px;top:146.20px;width:411.00px;height:17.28px;background:#1e56b6;"></div>
<div style="left:80.20px;top:163.48px;width:82.10px;height:129.92px;background:#1e56b6;"></div>
<div style="left:162.30px;top:163.48px;width:328.90px;height:129.92px;background:#fff;"></div>
<div style="left:491.20px;top:146.20px;width:82.40px;height:163.44px;background:#b2c5e6;"></div>
<div style="left:80.20px;top:293.40px;width:493.40px;height:16.24px;background:#b2c5e6;"></div>
<div style="left:162.30px;top:163.48px;width:328.90px;height:16.24px;background:#e6e9f8;"></div>
<div style="left:162.30px;top:163.08px;width:328.90px;height:0.80px;background:#adadad;"></div>
<div style="left:491.20px;top:163.08px;width:82.40px;height:0.80px;background:#93a2c4;"></div>
<div style="left:162.30px;top:179.32px;width:328.90px;height:0.80px;background:#adadad;"></div>
<div style="left:491.20px;top:179.32px;width:82.40px;height:0.80px;background:#93a2c4;"></div>
<div style="left:162.30px;top:195.56px;width:328.90px;height:0.80px;background:#adadad;"></div>
<div style="left:491.20px;top:195.56px;width:82.40px;height:0.80px;background:#93a2c4;"></div>
<div style="left:162.30px;top:211.80px;width:328.90px;height:0.80px;background:#adadad;"></div>
<div style="left:491.20px;top:211.80px;width:82.40px;height:0.80px;background:#93a2c4;"></div>
<div style="left:162.30px;top:228.04px;width:328.90px;height:0.80px;background:#adadad;"></div>
<div style="left:491.20px;top:228.04px;width:82.40px;height:0.80px;background:#93a2c4;"></div>
<div style="left:162.30px;top:244.28px;width:328.90px;height:0.80px;background:#adadad;"></div>
<div style="left:491.20px;top:244.28px;width:82.40px;height:0.80px;background:#93a2c4;"></div>
<div style="left:162.30px;top:260.52px;width:328.90px;height:0.80px;background:#adadad;"></div>
<div style="left:491.20px;top:260.52px;width:82.40px;height:0.80px;background:#93a2c4;"></div>
<div style="left:162.30px;top:276.76px;width:328.90px;height:0.80px;background:#adadad;"></div>
<div style="left:491.20px;top:276.76px;width:82.40px;height:0.80px;background:#93a2c4;"></div>
<div style="left:80.20px;top:293.00px;width:493.40px;height:0.80px;background:#93a2c4;"></div>
<div style="left:80.20px;top:309.24px;width:493.40px;height:0.80px;background:#93a2c4;"></div>
<div style="left:491.20px;top:145.80px;width:82.40px;height:0.80px;background:#93a2c4;"></div>
<div style="left:161.90px;top:163.48px;width:0.80px;height:129.92px;background:#adadad;"></div>
<div style="left:161.90px;top:293.40px;width:0.80px;height:16.24px;background:#93a2c4;"></div>
<div style="left:244.10px;top:163.48px;width:0.80px;height:129.92px;background:#adadad;"></div>
<div style="left:244.10px;top:293.40px;width:0.80px;height:16.24px;background:#93a2c4;"></div>
<div style="left:326.40px;top:163.48px;width:0.80px;height:129.92px;background:#adadad;"></div>
<div style="left:326.40px;top:293.40px;width:0.80px;height:16.24px;background:#93a2c4;"></div>
<div style="left:408.60px;top:163.48px;width:0.80px;height:129.92px;background:#adadad;"></div>
<div style="left:408.60px;top:293.40px;width:0.80px;height:16.24px;background:#93a2c4;"></div>
<div style="left:490.80px;top:145.80px;width:0.80px;height:163.84px;background:#93a2c4;"></div>
<div style="left:573.20px;top:145.80px;width:0.80px;height:163.84px;background:#93a2c4;"></div>
<div style="left:79.80px;top:293.40px;width:0.80px;height:16.24px;background:#93a2c4;"></div>
<div style="left:161.90px;top:146.20px;width:0.80px;height:17.28px;background:#1a4ca3;"></div>
<div style="left:244.10px;top:146.20px;width:0.80px;height:17.28px;background:#1a4ca3;"></div>
<div style="left:326.40px;top:146.20px;width:0.80px;height:17.28px;background:#1a4ca3;"></div>
<div style="left:408.60px;top:146.20px;width:0.80px;height:17.28px;background:#1a4ca3;"></div>
<div style="left:80.20px;top:163.08px;width:82.10px;height:0.80px;background:#1a4ca3;"></div>
<div style="left:80.20px;top:179.32px;width:82.10px;height:0.80px;background:#1a4ca3;"></div>
<div style="left:80.20px;top:195.56px;width:82.10px;height:0.80px;background:#1a4ca3;"></div>
<div style="left:80.20px;top:211.80px;width:82.10px;height:0.80px;background:#1a4ca3;"></div>
<div style="left:80.20px;top:228.04px;width:82.10px;height:0.80px;background:#1a4ca3;"></div>
<div style="left:80.20px;top:244.28px;width:82.10px;height:0.80px;background:#1a4ca3;"></div>
<div style="left:80.20px;top:260.52px;width:82.10px;height:0.80px;background:#1a4ca3;"></div>
<div style="left:80.20px;top:276.76px;width:82.10px;height:0.80px;background:#1a4ca3;"></div>
<div style="left:162.30px;top:163.48px;width:328.90px;height:16.24px;border:0.8px solid #9db3e2;box-sizing:border-box;"></div>
<span id="t83" style="top:148.48px;font-size:11.6px;line-height:13.92px;color:#fff;font-weight:700;left:203.40px;transform:translateX(-50%);">Q1</span>
<span id="t84" style="top:148.48px;font-size:11.6px;line-height:13.92px;color:#fff;font-weight:700;left:285.65px;transform:translateX(-50%);">Q2</span>
<span id="t85" style="top:148.48px;font-size:11.6px;line-height:13.92px;color:#fff;font-weight:700;left:367.90px;transform:translateX(-50%);">Q3</span>
<span id="t86" style="top:148.48px;font-size:11.6px;line-height:13.92px;color:#fff;font-weight:700;left:450.10px;transform:translateX(-50%);">Q4</span>
<span id="t87" style="top:148.48px;font-size:11.6px;line-height:13.92px;color:#111;font-weight:700;letter-spacing:-0.069px;left:532.40px;transform:translateX(-50%);">Total</span>
<span id="t88" style="top:164.94px;font-size:11.6px;line-height:13.92px;color:#fff;font-weight:700;letter-spacing:-0.751px;left:82.80px;">John</span>
<span id="t89" style="top:166.58px;font-size:10.7px;line-height:12.84px;color:#111;font-family:'DejaVu Sans',sans-serif;right:525.10px;-webkit-text-stroke:0.45px #111;">2,680</span>
<span id="t90" style="top:166.58px;font-size:10.7px;line-height:12.84px;color:#111;font-family:'DejaVu Sans',sans-serif;right:442.80px;-webkit-text-stroke:0.45px #111;">7,512</span>
<span id="t91" style="top:166.58px;font-size:10.7px;line-height:12.84px;color:#111;font-family:'DejaVu Sans',sans-serif;right:360.60px;-webkit-text-stroke:0.45px #111;">3,332</span>
<span id="t92" style="top:166.58px;font-size:10.7px;line-height:12.84px;color:#111;font-family:'DejaVu Sans',sans-serif;right:278.40px;-webkit-text-stroke:0.45px #111;">6,213</span>
<span id="t93" style="top:181.18px;font-size:11.6px;line-height:13.92px;color:#fff;font-weight:700;letter-spacing:-0.691px;left:82.80px;">Lucy</span>
<span id="t94" style="top:182.82px;font-size:10.7px;line-height:12.84px;color:#111;font-family:'DejaVu Sans',sans-serif;right:525.10px;-webkit-text-stroke:0.45px #111;">2,736</span>
<span id="t95" style="top:182.82px;font-size:10.7px;line-height:12.84px;color:#111;font-family:'DejaVu Sans',sans-serif;right:442.80px;-webkit-text-stroke:0.45px #111;">2,645</span>
<span id="t96" style="top:182.82px;font-size:10.7px;line-height:12.84px;color:#111;font-family:'DejaVu Sans',sans-serif;right:360.60px;-webkit-text-stroke:0.45px #111;">3,632</span>
<span id="t97" style="top:182.82px;font-size:10.7px;line-height:12.84px;color:#111;font-family:'DejaVu Sans',sans-serif;right:278.40px;-webkit-text-stroke:0.45px #111;">60</span>
<span id="t98" style="top:182.06px;font-size:10.3px;line-height:12.36px;color:#111;font-weight:700;font-family:'DejaVu Sans',sans-serif;right:196.55px;letter-spacing:-0.15px;">9,073</span>
<span id="t99" style="top:197.42px;font-size:11.6px;line-height:13.92px;color:#fff;font-weight:700;letter-spacing:-0.416px;left:82.80px;">George</span>
<span id="t100" style="top:199.06px;font-size:10.7px;line-height:12.84px;color:#111;font-family:'DejaVu Sans',sans-serif;right:525.10px;-webkit-text-stroke:0.45px #111;">7,234</span>
<span id="t101" style="top:199.06px;font-size:10.7px;line-height:12.84px;color:#111;font-family:'DejaVu Sans',sans-serif;right:442.80px;-webkit-text-stroke:0.45px #111;">7,506</span>
<span id="t102" style="top:199.06px;font-size:10.7px;line-height:12.84px;color:#111;font-family:'DejaVu Sans',sans-serif;right:360.60px;-webkit-text-stroke:0.45px #111;">9,867</span>
<span id="t103" style="top:199.06px;font-size:10.7px;line-height:12.84px;color:#111;font-family:'DejaVu Sans',sans-serif;right:278.40px;-webkit-text-stroke:0.45px #111;">3,842</span>
<span id="t104" style="top:198.30px;font-size:10.3px;line-height:12.36px;color:#111;font-weight:700;font-family:'DejaVu Sans',sans-serif;right:196.55px;letter-spacing:-0.15px;">28,449</span>
<span id="t105" style="top:213.66px;font-size:11.6px;line-height:13.92px;color:#fff;font-weight:700;letter-spacing:-0.275px;left:82.80px;">Grace</span>
<span id="t106" style="top:215.30px;font-size:10.7px;line-height:12.84px;color:#111;font-family:'DejaVu Sans',sans-serif;right:525.10px;-webkit-text-stroke:0.45px #111;">8,710</span>
<span id="t107" style="top:215.30px;font-size:10.7px;line-height:12.84px;color:#111;font-family:'DejaVu Sans',sans-serif;right:442.80px;-webkit-text-stroke:0.45px #111;">9,102</span>
<span id="t108" style="top:215.30px;font-size:10.7px;line-height:12.84px;color:#111;font-family:'DejaVu Sans',sans-serif;right:360.60px;-webkit-text-stroke:0.45px #111;">953</span>
<span id="t109" style="top:215.30px;font-size:10.7px;line-height:12.84px;color:#111;font-family:'DejaVu Sans',sans-serif;right:278.40px;-webkit-text-stroke:0.45px #111;">8,688</span>
<span id="t110" style="top:214.54px;font-size:10.3px;line-height:12.36px;color:#111;font-weight:700;font-family:'DejaVu Sans',sans-serif;right:196.55px;letter-spacing:-0.15px;">27,453</span>
<span id="t111" style="top:229.90px;font-size:11.6px;line-height:13.92px;color:#fff;font-weight:700;letter-spacing:0.141px;left:82.80px;">Maria</span>
<span id="t112" style="top:231.54px;font-size:10.7px;line-height:12.84px;color:#111;font-family:'DejaVu Sans',sans-serif;right:525.10px;-webkit-text-stroke:0.45px #111;">5,209</span>
<span id="t113" style="top:231.54px;font-size:10.7px;line-height:12.84px;color:#111;font-family:'DejaVu Sans',sans-serif;right:442.80px;-webkit-text-stroke:0.45px #111;">2,588</span>
<span id="t114" style="top:231.54px;font-size:10.7px;line-height:12.84px;color:#111;font-family:'DejaVu Sans',sans-serif;right:360.60px;-webkit-text-stroke:0.45px #111;">1,802</span>
<span id="t115" style="top:231.54px;font-size:10.7px;line-height:12.84px;color:#111;font-family:'DejaVu Sans',sans-serif;right:278.40px;-webkit-text-stroke:0.45px #111;">6,942</span>
<span id="t116" style="top:230.78px;font-size:10.3px;line-height:12.36px;color:#111;font-weight:700;font-family:'DejaVu Sans',sans-serif;right:196.55px;letter-spacing:-0.15px;">16,541</span>
<span id="t117" style="top:246.14px;font-size:11.6px;line-height:13.92px;color:#fff;font-weight:700;letter-spacing:0.055px;left:82.80px;">Herman</span>
<span id="t118" style="top:247.78px;font-size:10.7px;line-height:12.84px;color:#111;font-family:'DejaVu Sans',sans-serif;right:525.10px;-webkit-text-stroke:0.45px #111;">4,164</span>
<span id="t119" style="top:247.78px;font-size:10.7px;line-height:12.84px;color:#111;font-family:'DejaVu Sans',sans-serif;right:442.80px;-webkit-text-stroke:0.45px #111;">61</span>
<span id="t120" style="top:247.78px;font-size:10.7px;line-height:12.84px;color:#111;font-family:'DejaVu Sans',sans-serif;right:360.60px;-webkit-text-stroke:0.45px #111;">3,807</span>
<span id="t121" style="top:247.78px;font-size:10.7px;line-height:12.84px;color:#111;font-family:'DejaVu Sans',sans-serif;right:278.40px;-webkit-text-stroke:0.45px #111;">2,828</span>
<span id="t122" style="top:247.02px;font-size:10.3px;line-height:12.36px;color:#111;font-weight:700;font-family:'DejaVu Sans',sans-serif;right:196.55px;letter-spacing:-0.15px;">10,860</span>
<span id="t123" style="top:262.38px;font-size:11.6px;line-height:13.92px;color:#fff;font-weight:700;letter-spacing:-0.516px;left:82.80px;">Bob</span>
<span id="t124" style="top:264.02px;font-size:10.7px;line-height:12.84px;color:#111;font-family:'DejaVu Sans',sans-serif;right:525.10px;-webkit-text-stroke:0.45px #111;">8,742</span>
<span id="t125" style="top:264.02px;font-size:10.7px;line-height:12.84px;color:#111;font-family:'DejaVu Sans',sans-serif;right:442.80px;-webkit-text-stroke:0.45px #111;">4,440</span>
<span id="t126" style="top:264.02px;font-size:10.7px;line-height:12.84px;color:#111;font-family:'DejaVu Sans',sans-serif;right:360.60px;-webkit-text-stroke:0.45px #111;">6,841</span>
<span id="t127" style="top:264.02px;font-size:10.7px;line-height:12.84px;color:#111;font-family:'DejaVu Sans',sans-serif;right:278.40px;-webkit-text-stroke:0.45px #111;">1,149</span>
<span id="t128" style="top:263.26px;font-size:10.3px;line-height:12.36px;color:#111;font-weight:700;font-family:'DejaVu Sans',sans-serif;right:196.55px;letter-spacing:-0.15px;">21,172</span>
<span id="t129" style="top:278.62px;font-size:11.6px;line-height:13.92px;color:#fff;font-weight:700;letter-spacing:-0.484px;left:82.80px;">Jane</span>
<span id="t130" style="top:280.26px;font-size:10.7px;line-height:12.84px;color:#111;font-family:'DejaVu Sans',sans-serif;right:525.10px;-webkit-text-stroke:0.45px #111;">1,585</span>
<span id="t131" style="top:280.26px;font-size:10.7px;line-height:12.84px;color:#111;font-family:'DejaVu Sans',sans-serif;right:442.80px;-webkit-text-stroke:0.45px #111;">3,969</span>
<span id="t132" style="top:280.26px;font-size:10.7px;line-height:12.84px;color:#111;font-family:'DejaVu Sans',sans-serif;right:360.60px;-webkit-text-stroke:0.45px #111;">3,217</span>
<span id="t133" style="top:280.26px;font-size:10.7px;line-height:12.84px;color:#111;font-family:'DejaVu Sans',sans-serif;right:278.40px;-webkit-text-stroke:0.45px #111;">1,502</span>
<span id="t134" style="top:279.50px;font-size:10.3px;line-height:12.36px;color:#111;font-weight:700;font-family:'DejaVu Sans',sans-serif;right:196.55px;letter-spacing:-0.15px;">10,273</span>
<span id="t135" style="top:294.86px;font-size:11.6px;line-height:13.92px;color:#111;font-weight:700;letter-spacing:-0.069px;left:82.80px;">Total</span>
<span id="t136" style="top:295.74px;font-size:10.3px;line-height:12.36px;color:#111;font-weight:700;font-family:'DejaVu Sans',sans-serif;right:525.65px;letter-spacing:-0.15px;">41,060</span>
<span id="t137" style="top:295.74px;font-size:10.3px;line-height:12.36px;color:#111;font-weight:700;font-family:'DejaVu Sans',sans-serif;right:443.35px;letter-spacing:-0.15px;">37,823</span>
<span id="t138" style="top:295.74px;font-size:10.3px;line-height:12.36px;color:#111;font-weight:700;font-family:'DejaVu Sans',sans-serif;right:361.15px;letter-spacing:-0.15px;">33,451</span>
<span id="t139" style="top:295.74px;font-size:10.3px;line-height:12.36px;color:#111;font-weight:700;font-family:'DejaVu Sans',sans-serif;right:278.95px;letter-spacing:-0.15px;">31,224</span>
<span id="g3f" style="left:493.60px;top:164.76px;font-size:11.6px;line-height:14.4px;font-weight:700;color:#111;letter-spacing:-0.1px;">=SUM(<span style="position:static;color:#4a74c9;">C3:F3</span>)</span>
<svg style="left:554.20px;top:169.20px;" width="5" height="12.4" viewBox="0 0 5 12.4"><path d="M0.4 0.5 Q2.5 0.5 2.5 2 Q2.5 0.5 4.6 0.5 M2.5 2 L2.5 10 M0.4 11.5 Q2.5 11.5 2.5 10 Q2.5 11.5 4.6 11.5" fill="none" stroke="#444" stroke-width="1.1"/></svg>
<div style="left:326.80px;top:309.64px;width:303.50px;height:16.24px;background:#eceff9;border:0.8px solid #c3cdea;box-sizing:border-box;"></div>
<div style="left:630.30px;top:309.64px;width:114.70px;height:16.24px;background:#b2c5e6;"></div>
<span id="i12f" style="left:632.90px;top:310.02px;font-size:11.6px;line-height:14.4px;font-weight:700;color:#111;letter-spacing:0px;">=SUM(<span style="position:static;color:#4a74c9;">E12:H12</span>)</span>
<div style="left:630.10px;top:309.34px;width:57.50px;height:16.84px;border:0.7px solid #7688a3;border-right:none;box-sizing:border-box;"></div>
<div style="left:639.80px;top:326.60px;width:89.20px;height:10.20px;background:#fff;border:0.6px solid #d2d2d2;box-sizing:border-box;border-radius:1.5px;box-shadow:0 0.5px 1px rgba(0,0,0,0.12);"></div>
<span id="tip" style="left:642.6px;top:327.9px;font-size:6.2px;line-height:7.4px;color:#777;"><b style="color:#444;">SUM</b>(number1, [number2], ...)</span>
<svg style="left:664.40px;top:318.40px;" width="5" height="8" viewBox="0 0 5 8"><path d="M0.5 0.5 L0.5 6.4 L1.9 5.2 L2.9 7.4 L3.8 7 L2.8 4.9 L4.6 4.8 Z" fill="#555" stroke="#eee" stroke-width="0.3"/></svg>
<svg style="left:0;top:0;" width="768" height="432" viewBox="0 0 768 432"><polygon points="578.4,172.3 615.6,149.8 615.6,162 685,162 685,182.8 615.6,182.8 615.6,195.3" fill="#1f55b6"/><polygon points="623.4,317.7 586.2,295 586.2,307.3 516.6,307.3 516.6,327.9 586.2,327.9 586.2,341" fill="#1f55b6"/></svg>
</div>
</body>
</html>
